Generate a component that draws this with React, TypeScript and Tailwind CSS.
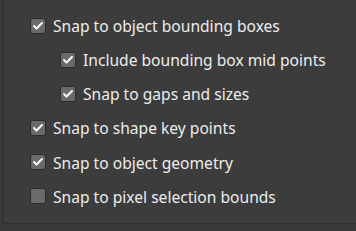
import { Check } from 'lucide-react';

type Option = {
    label: string;
    checked: boolean;
    nested?: boolean;
};

const options: Option[] = [
    { label: 'Snap to object bounding boxes', checked: true },
    { label: 'Include bounding box mid points', checked: true, nested: true },
    { label: 'Snap to gaps and sizes', checked: true, nested: true },
    { label: 'Snap to shape key points', checked: true },
    { label: 'Snap to object geometry', checked: true },
    { label: 'Snap to pixel selection bounds', checked: false },
];

function CheckBox({ checked }: { checked: boolean }) {
    return (
        <span className="flex h-[16px] w-[16px] shrink-0 items-center justify-center rounded-[3px] border border-[#2a2a2a] bg-[#6a6a6a]">
            {checked ? <Check className="h-[12px] w-[12px] text-white" strokeWidth={3.8} /> : null}
        </span>
    );
}

export default function App() {
    return (
        <div className="h-[231px] w-[356px] bg-[#383838] font-['Noto_Sans',sans-serif]">
            <div className="ml-[3px] flex h-[224px] flex-col gap-[14.2px] border-b border-l border-[#2f2f2f] bg-[#3c3c3c] pl-[26px] pt-[15.5px]">
                {options.map((option) => (
                    <label
                        key={option.label}
                        className={`flex h-[20px] items-center gap-[7px] whitespace-nowrap text-[15.6px] text-[#ececec] ${option.nested ? 'pl-[30px]' : ''}`}
                    >
                        <CheckBox checked={option.checked} />
                        <span className="pt-[2px]">{option.label}</span>
                    </label>
                ))}
            </div>
        </div>
    );
}
